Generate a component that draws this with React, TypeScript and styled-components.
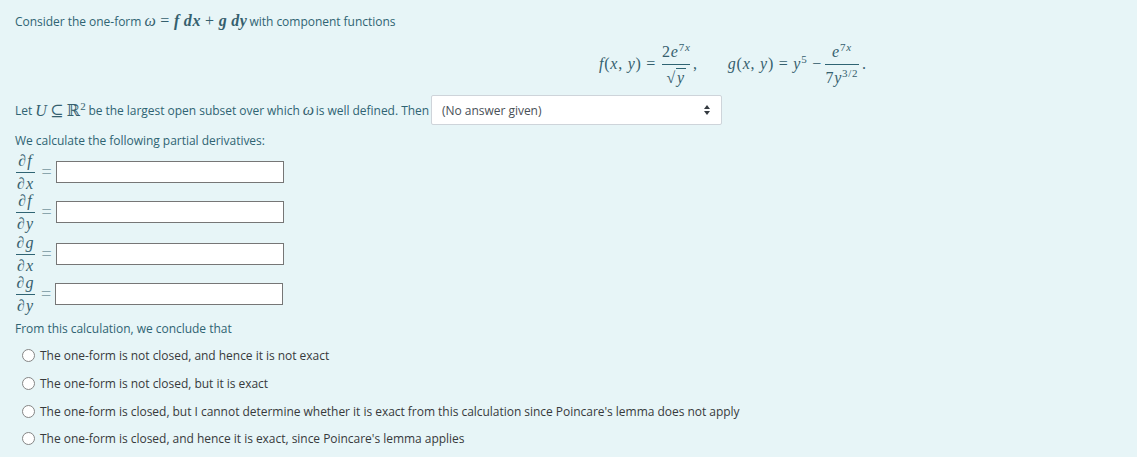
import styled, { createGlobalStyle } from 'styled-components';

const GlobalStyle = createGlobalStyle`
  html, body {
    margin: 0;
    padding: 0;
    background-color: #e7f5f7;
  }
`;

const Wrapper = styled.div`
  width: 1137px;
  height: 457px;
  overflow: hidden;
  box-sizing: border-box;
  padding: 12px 15px 0;
  background-color: #e7f5f7;
  color: #2f6473;
  font-family: 'Open Sans', sans-serif;
  font-size: 12px;
  letter-spacing: -0.03px;
`;

const Line = styled.div`
  display: flex;
  align-items: center;
  height: 18px;
  white-space: pre;
`;

const Math = styled.span<{ $after?: number; $squeeze?: number }>`
  margin-right: ${(props) => props.$after ?? 0}px;
  font-family: 'Liberation Serif', 'DejaVu Serif', serif;
  font-size: 16px;
  letter-spacing: 0.55px;
  word-spacing: ${(props) => props.$squeeze ?? 0}px;
  color: #35606e;
`;

const I = styled.i<{ $bold?: boolean }>`
  font-weight: ${(props) => (props.$bold ? 700 : 400)};
`;

const Display = styled.div`
  display: flex;
  align-items: center;
  height: 44px;
  margin: 12px 0 0 584px;
  font-family: 'Liberation Serif', 'DejaVu Serif', serif;
  font-size: 16px;
  letter-spacing: 0.75px;
  color: #35606e;
  white-space: pre;
`;

const Formula = styled.span<{ $left?: number }>`
  margin-left: ${(props) => props.$left ?? 0}px;
`;

const Frac = styled.span<{ $width: number; $left: number }>`
  display: inline-flex;
  flex-direction: column;
  align-items: center;
  width: ${(props) => props.$width}px;
  margin: 0 3px 0 ${(props) => props.$left}px;
  line-height: 1;
`;

const Top = styled.span`
  display: block;
  width: 100%;
  height: 20px;
  line-height: 15px;
  text-align: center;
  border-bottom: 1px solid #2f6473;
`;

const Bottom = styled.span`
  display: block;
  height: 19px;
  line-height: 26px;
  text-align: center;
`;

const Sup = styled.sup`
  font-size: 11px;
  line-height: 0;
  vertical-align: 6px;
`;

const Radical = styled.span`
  border-top: 1px solid #2f6473;
  padding: 0 1px;
`;

const SelectLine = styled(Line)`
  height: 30px;
  margin-top: 9px;
`;

const SelectBox = styled.div`
  display: flex;
  align-items: center;
  justify-content: space-between;
  box-sizing: border-box;
  width: 291px;
  height: 30px;
  margin-left: 2px;
  padding: 0 11px 0 10px;
  background-color: #fff;
  border: 1px solid #ced4da;
  border-radius: 2px;
  color: #495057;
`;

const Prompt = styled(Line)`
  margin-top: 6px;
`;

const DerivRow = styled.div<{ $height: number }>`
  display: flex;
  align-items: flex-start;
  height: ${(props) => props.$height}px;
`;

const DerivFrac = styled.span`
  display: inline-flex;
  flex-direction: column;
  align-items: center;
  width: 19px;
  margin: -5px 0 0 1px;
  font-family: 'Liberation Serif', 'DejaVu Serif', serif;
  font-size: 16px;
  letter-spacing: 1px;
  color: #35606e;
`;

const DerivTop = styled.span`
  display: block;
  width: 100%;
  height: 16px;
  line-height: 10px;
  text-align: center;
  font-weight: 700;
  border-bottom: 1px solid #2f6473;
`;

const DerivBottom = styled.span`
  display: block;
  height: 20px;
  line-height: 22px;
  text-align: center;
  font-weight: 700;
`;

const Equals = styled.span<{ $width: number }>`
  width: ${(props) => props.$width}px;
  padding-left: 2px;
  box-sizing: border-box;
  line-height: 22px;
  text-align: center;
  font-family: 'Liberation Serif', serif;
  font-size: 18px;
  color: #8aa5ad;
`;

const AnswerInput = styled.div`
  box-sizing: border-box;
  width: 228px;
  height: 22px;
  background-color: #fff;
  border: 1px solid #767676;
`;

const Rows = styled.div`
  margin-top: 12px;
`;

const Conclude = styled(Line)`
  margin-top: 6px;
`;

const Options = styled.div`
  margin-top: 4px;
  display: flex;
  flex-direction: column;
`;

const Option = styled.div<{ $height: number }>`
  display: flex;
  align-items: center;
  height: ${(props) => props.$height}px;
  padding-left: 7px;
  color: #373a3c;
  white-space: pre;
`;

const Radio = styled.span`
  box-sizing: border-box;
  width: 13px;
  height: 13px;
  margin-right: 5px;
  background-color: #fff;
  border: 1px solid #858585;
  border-radius: 50%;
`;

const derivatives = [
  { top: 'f', bottom: 'x', height: 40, gutter: 21 },
  { top: 'f', bottom: 'y', height: 42, gutter: 21 },
  { top: 'g', bottom: 'x', height: 40, gutter: 21 },
  { top: 'g', bottom: 'y', height: 30, gutter: 20 },
];

const options = [
  { label: 'The one-form is not closed, and hence it is not exact', height: 28 },
  { label: 'The one-form is not closed, but it is exact', height: 28 },
  {
    label:
      "The one-form is closed, but I cannot determine whether it is exact from this calculation since Poincare's lemma does not apply",
    height: 28,
  },
  { label: "The one-form is closed, and hence it is exact, since Poincare's lemma applies", height: 27 },
];

function App() {
  return (
    <Wrapper>
      <GlobalStyle />
      <Line>
        Consider the one-form{' '}
        <Math $after={2} $squeeze={-0.5}>
          <I>ω</I> = <I $bold>f dx</I> + <I $bold>g dy</I>
        </Math>
        with component functions
      </Line>

      <Display>
        <Formula>
          <I>f</I>(<I>x</I>, <I>y</I>) =
        </Formula>
        <Frac $width={28} $left={6}>
          <Top>
            2<I>e</I>
            <Sup>
              7<I>x</I>
            </Sup>
          </Top>
          <Bottom>
            √<Radical>
              <I>y</I>
            </Radical>
          </Bottom>
        </Frac>
        <Formula>,</Formula>
        <Formula $left={30}>
          <I>g</I>(<I>x</I>, <I>y</I>) = <I>y</I>
          <Sup>5</Sup> −
        </Formula>
        <Frac $width={34} $left={3}>
          <Top>
            <I>e</I>
            <Sup>
              7<I>x</I>
            </Sup>
          </Top>
          <Bottom>
            7<I>y</I>
            <Sup>3/2</Sup>
          </Bottom>
        </Frac>
        <Formula>.</Formula>
      </Display>

      <SelectLine>
        Let{' '}
        <Math $after={2} $squeeze={-2}>
          <I>U</I> ⊆ ℝ<Sup>2</Sup>
        </Math>
        be the largest open subset over which{' '}
        <Math $after={1}>
          <I>ω</I>
        </Math>
        is well defined. Then
        <SelectBox>
          (No answer given)
          <svg width="6" height="10" viewBox="0 0 6 10">
            <path d="M3 0 L6 4 L0 4 Z M3 10 L6 6 L0 6 Z" fill="#343a40" />
          </svg>
        </SelectBox>
      </SelectLine>

      <Prompt>We calculate the following partial derivatives:</Prompt>

      <Rows>
        {derivatives.map((row, index) => (
          <DerivRow key={index} $height={row.height}>
            <DerivFrac>
              <DerivTop>
                ∂<I>{row.top}</I>
              </DerivTop>
              <DerivBottom>
                ∂<I>{row.bottom}</I>
              </DerivBottom>
            </DerivFrac>
            <Equals $width={row.gutter}>=</Equals>
            <AnswerInput />
          </DerivRow>
        ))}
      </Rows>

      <Conclude>From this calculation, we conclude that</Conclude>

      <Options>
        {options.map((option) => (
          <Option key={option.label} $height={option.height}>
            <Radio />
            {option.label}
          </Option>
        ))}
      </Options>
    </Wrapper>
  );
}

export default App;
